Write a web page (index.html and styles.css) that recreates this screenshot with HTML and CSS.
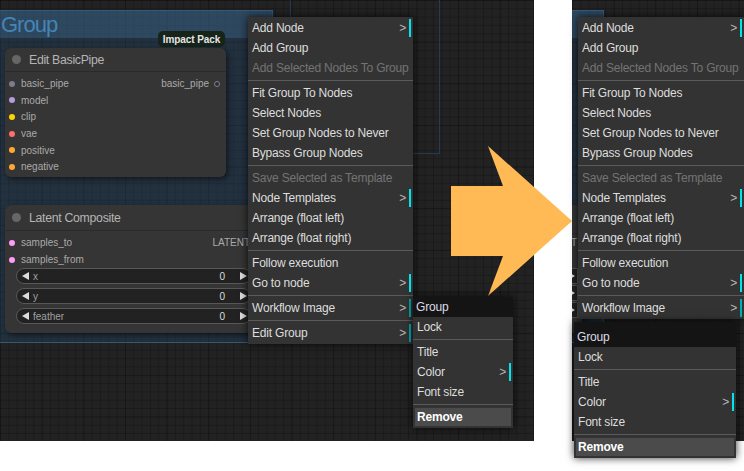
FILE: index.html
```html
<!DOCTYPE html>
<html>
<head>
<meta charset="utf-8">
<link rel="stylesheet" href="styles.css">
</head>
<body>
<div class="stage">
  <div class="panel panel-left">
    <div class="scene">
      <div class="outline"></div>
      <div class="group"><div class="group-head">Group</div></div>
      <div class="badge">Impact Pack</div>
      <div class="node node-pipe">
        <div class="node-title"><span class="ndot"></span>Edit BasicPipe</div>
        <div class="node-body">
          <div class="slot-row"><span class="in"><i class="dot d-pipe"></i>basic_pipe</span><span class="out">basic_pipe<i class="dot d-hollow"></i></span></div>
          <div class="slot-row"><span class="in"><i class="dot d-model"></i>model</span></div>
          <div class="slot-row"><span class="in"><i class="dot d-clip"></i>clip</span></div>
          <div class="slot-row"><span class="in"><i class="dot d-vae"></i>vae</span></div>
          <div class="slot-row"><span class="in"><i class="dot d-cond"></i>positive</span></div>
          <div class="slot-row"><span class="in"><i class="dot d-cond"></i>negative</span></div>
        </div>
      </div>
      <div class="node node-latent">
        <div class="node-title tall"><span class="ndot"></span>Latent Composite</div>
        <div class="node-body lat-body">
          <div class="slot-row lrow"><span class="in"><i class="dot d-latent"></i>samples_to</span><span class="out tight">LATENT<i class="dot d-latent"></i></span></div>
          <div class="slot-row lrow"><span class="in"><i class="dot d-latent"></i>samples_from</span></div>
          <div class="widget"><i class="tri-l"></i><span class="wlabel">x</span><span class="wval">0</span><i class="tri-r"></i></div>
          <div class="widget"><i class="tri-l"></i><span class="wlabel">y</span><span class="wval">0</span><i class="tri-r"></i></div>
          <div class="widget"><i class="tri-l"></i><span class="wlabel">feather</span><span class="wval">0</span><i class="tri-r"></i></div>
        </div>
      </div>
    </div>
  </div>
  <div class="panel panel-right">
    <div class="rgroup"><div class="rgroup-head"></div></div>
    <div class="rnode">
      <div class="rnode-title"></div>
      <div class="rrow">T</div>
      <div class="rrow"></div>
      <div class="rwidget"><i class="tri-r"></i></div>
      <div class="rwidget"><i class="tri-r"></i></div>
      <div class="rwidget"><i class="tri-r"></i></div>
    </div>
  </div>
</div>

<svg class="arrow" width="122" height="151" viewBox="0 0 122 151"><polygon points="0,40 52,40 37,0 121,75 37,150 52,110 0,110" fill="#ffba55"/></svg>

<div class="menu menu-a">
  <div class="mi sub">Add Node</div>
  <div class="mi">Add Group</div>
  <div class="mi off">Add Selected Nodes To Group</div>
  <div class="sep"></div>
  <div class="mi">Fit Group To Nodes</div>
  <div class="mi">Select Nodes</div>
  <div class="mi">Set Group Nodes to Never</div>
  <div class="mi">Bypass Group Nodes</div>
  <div class="sep"></div>
  <div class="mi off">Save Selected as Template</div>
  <div class="mi sub">Node Templates</div>
  <div class="mi">Arrange (float left)</div>
  <div class="mi">Arrange (float right)</div>
  <div class="sep"></div>
  <div class="mi">Follow execution</div>
  <div class="mi sub">Go to node</div>
  <div class="sep"></div>
  <div class="mi sub dim">Workflow Image</div>
  <div class="sep"></div>
  <div class="mi sub dim">Edit Group</div>
</div>

<div class="menu menu-sub menu-sub-a">
  <div class="mtitle">Group</div>
  <div class="mi">Lock</div>
  <div class="sep"></div>
  <div class="mi">Title</div>
  <div class="mi sub">Color</div>
  <div class="mi">Font size</div>
  <div class="sep"></div>
  <div class="mi hl">Remove</div>
</div>

<div class="menu menu-b">
  <div class="mi sub">Add Node</div>
  <div class="mi">Add Group</div>
  <div class="mi off">Add Selected Nodes To Group</div>
  <div class="sep"></div>
  <div class="mi">Fit Group To Nodes</div>
  <div class="mi">Select Nodes</div>
  <div class="mi">Set Group Nodes to Never</div>
  <div class="mi">Bypass Group Nodes</div>
  <div class="sep"></div>
  <div class="mi off">Save Selected as Template</div>
  <div class="mi sub">Node Templates</div>
  <div class="mi">Arrange (float left)</div>
  <div class="mi">Arrange (float right)</div>
  <div class="sep"></div>
  <div class="mi">Follow execution</div>
  <div class="mi sub">Go to node</div>
  <div class="sep"></div>
  <div class="mi sub dim">Workflow Image</div>
</div>

<div class="menu menu-sub menu-sub-b">
  <div class="mtitle mtitle-tall">Group</div>
  <div class="mi">Lock</div>
  <div class="sep"></div>
  <div class="mi">Title</div>
  <div class="mi sub">Color</div>
  <div class="mi">Font size</div>
  <div class="sep"></div>
  <div class="mi hl">Remove</div>
</div>
</body>
</html>
```

FILE: styles.css
```css
* { box-sizing: border-box; }

body {
  margin: 0;
  width: 744px;
  height: 471px;
  background: #ffffff;
  position: relative;
  overflow: hidden;
  font-family: "Liberation Sans", Arial, sans-serif;
}

.stage {
  display: flex;
  gap: 38px;
}

.panel {
  height: 441px;
  position: relative;
  overflow: hidden;
  background-color: #222222;
  background-image:
    linear-gradient(90deg, rgba(0,0,0,0.16) 1px, transparent 1px),
    linear-gradient(rgba(0,0,0,0.16) 1px, transparent 1px),
    linear-gradient(90deg, rgba(0,0,0,0.2) 1px, transparent 1px),
    linear-gradient(rgba(0,0,0,0.2) 1px, transparent 1px);
  background-size: 41.667px 41.667px, 41.667px 41.667px, 8.333px 8.333px, 8.333px 8.333px;
}

.panel-left { width: 534px; }
.panel-right { width: 172px; }

.scene {
  position: absolute;
  left: 0;
  top: 0;
  width: 534px;
  height: 441px;
}

.outline {
  position: absolute;
  left: 290px;
  top: -10px;
  width: 150px;
  height: 164px;
  border: 1px solid #223c58;
}

.group {
  position: absolute;
  left: -1px;
  top: 10px;
  width: 274px;
  height: 333px;
  border: 1px solid #36597a;
  background: rgba(40, 90, 140, 0.28);
}

.group-head {
  height: 27px;
  background: rgba(70, 120, 160, 0.33);
  color: #4584b5;
  font-size: 22px;
  line-height: 27px;
  padding-left: 1px;
  letter-spacing: -1px;
}

.badge {
  position: absolute;
  left: 158px;
  top: 31px;
  width: 67px;
  height: 16px;
  border-radius: 5px;
  background: #16241a;
  color: #e6e6e6;
  font-size: 10px;
  font-weight: bold;
  letter-spacing: -0.1px;
  display: flex;
  align-items: center;
  justify-content: center;
}

.node {
  position: absolute;
  background: #353535;
  border-radius: 6px;
  box-shadow: 2px 2px 6px rgba(0, 0, 0, 0.55);
  color: #aaaaaa;
}

.node-pipe { left: 5px; top: 48px; width: 221px; height: 129px; }
.node-latent { left: 5px; top: 205px; width: 257px; height: 128px; }

.node-title {
  height: 24px;
  border-bottom: 1px solid #2a2a2a;
  display: flex;
  align-items: center;
  gap: 8px;
  padding-left: 7px;
  font-size: 12.3px;
  letter-spacing: -0.3px;
  color: #b4b4b4;
}

.node-title.tall { height: 26px; }

.ndot {
  width: 9px;
  height: 9px;
  border-radius: 50%;
  background: #666666;
}

.node-body { padding-top: 3.5px; }
.lat-body { padding-top: 3px; }

.slot-row {
  height: 16.6px;
  display: flex;
  justify-content: space-between;
  align-items: center;
  font-size: 10px;
  color: #aaaaaa;
}

.lrow { height: 17px; }

.in {
  display: flex;
  align-items: center;
  gap: 6px;
  padding-left: 4px;
}

.out {
  display: flex;
  align-items: center;
  gap: 5px;
  padding-right: 6px;
}

.out.tight { gap: 3px; padding-right: 3px; }

.dot {
  width: 6px;
  height: 6px;
  border-radius: 50%;
  display: block;
}

.d-pipe { background: #7e7a8c; }
.d-model { background: #b39ddb; }
.d-clip { background: #ffd500; }
.d-vae { background: #ff6e6e; }
.d-cond { background: #ffa931; }
.d-latent { background: #ff9cf9; }
.d-hollow { background: #2c2c30; border: 1px solid #85808f; }

.widget {
  margin: 0 11px 4px;
  height: 16px;
  border: 1px solid #575757;
  border-radius: 8px;
  background: #222222;
  display: flex;
  align-items: center;
  padding: 0 3px 0 5px;
  font-size: 10px;
  color: #a0a0a0;
}

.tri-l {
  width: 0;
  height: 0;
  border-top: 4px solid transparent;
  border-bottom: 4px solid transparent;
  border-right: 7px solid #dddddd;
}

.tri-r {
  width: 0;
  height: 0;
  border-top: 4px solid transparent;
  border-bottom: 4px solid transparent;
  border-left: 7px solid #dddddd;
}

.wlabel { margin-left: 4px; flex: 1; }
.wval { color: #dddddd; margin-right: 15px; }

/* right panel fragments (cropped view) */
.rgroup {
  position: absolute;
  left: -10px;
  top: 10px;
  width: 42px;
  height: 333px;
  border: 1px solid #36597a;
  background: rgba(40, 90, 140, 0.28);
}

.rgroup-head {
  height: 27px;
  background: rgba(70, 120, 160, 0.33);
}

.rnode {
  position: absolute;
  left: -30px;
  top: 205px;
  width: 40px;
  height: 128px;
  background: #353535;
  border-radius: 6px;
  box-shadow: 2px 2px 6px rgba(0, 0, 0, 0.55);
  padding-right: 4px;
}

.rnode-title {
  height: 29px;
  border-bottom: 1px solid #2a2a2a;
}

.rrow {
  height: 17px;
  line-height: 17px;
  text-align: right;
  font-size: 10px;
  color: #aaaaaa;
  padding-right: 1px;
}

.rwidget {
  height: 16px;
  margin-bottom: 1px;
  background: #222222;
  border: 1px solid #575757;
  border-left: none;
  display: flex;
  align-items: center;
  justify-content: flex-end;
  padding-right: 2px;
}

.arrow {
  position: absolute;
  left: 451px;
  top: 146px;
}

.menu {
  position: absolute;
  background: #333333;
  display: flex;
  flex-direction: column;
  padding: 1px 0;
  box-shadow: 0 0 8px rgba(0, 0, 0, 0.8);
  font-size: 12px;
  letter-spacing: -0.2px;
  color: #dddddd;
}

.menu-a { left: 248px; top: 17px; width: 165px; }
.menu-b { left: 578px; top: 17px; width: 166px; }
.menu-sub { padding-top: 0; }
.menu-sub-a { left: 413px; top: 297px; width: 100px; }
.menu-sub-b { left: 574px; top: 322px; width: 162px; }

.mi {
  height: 18px;
  line-height: 18px;
  margin: 1px 2px;
  padding-left: 2px;
  white-space: nowrap;
  position: relative;
}

.mi.off { color: #737373; }

.mi.sub { border-right: 2px solid #00e4ee; }
.mi.sub.dim { border-right-color: #00aeb4; }

.mi.sub::after {
  content: ">";
  position: absolute;
  right: 3px;
  top: 0;
  color: #b8b8b8;
}

.mi.hl {
  background: #4b4b4b;
  color: #ffffff;
  font-weight: bold;
}

.sep {
  height: 0;
  border-top: 1px solid #5a5a5a;
  margin: 2px 0;
}

.mtitle {
  height: 20px;
  line-height: 20px;
  background: #141414;
  color: #dcdce6;
  padding-left: 3px;
}

.mtitle-tall {
  height: 25px;
  padding-top: 5px;
}
```
